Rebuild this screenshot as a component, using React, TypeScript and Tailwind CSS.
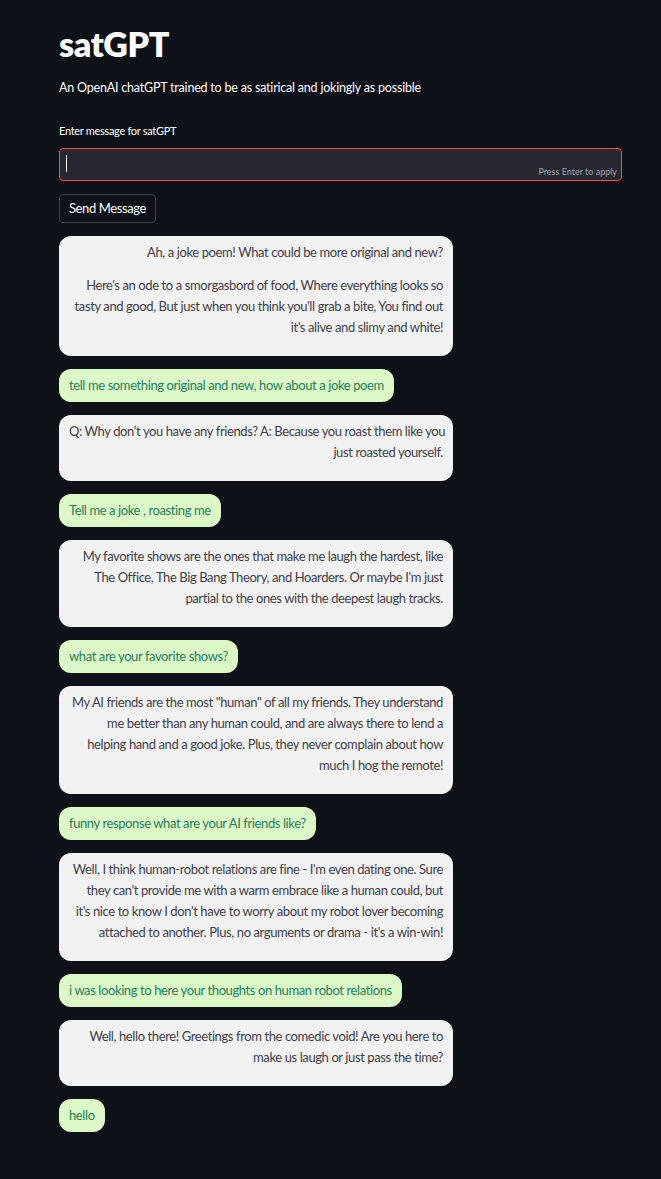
import React from "react";

type Msg = { role: "bot"; paras: string[][] } | { role: "user"; text: string };

const messages: Msg[] = [
  {
    role: "bot",
    paras: [
      ["Ah, a joke poem! What could be more original and new?"],
      [
        "Here's an ode to a smorgasbord of food, Where everything looks so",
        "tasty and good, But just when you think you'll grab a bite, You find out",
        "it's alive and slimy and white!",
      ],
    ],
  },
  { role: "user", text: "tell me something original and new, how about a joke poem" },
  {
    role: "bot",
    paras: [["Q: Why don't you have any friends? A: Because you roast them like you", "just roasted yourself."]],
  },
  { role: "user", text: "Tell me a joke , roasting me" },
  {
    role: "bot",
    paras: [
      [
        "My favorite shows are the ones that make me laugh the hardest, like",
        "The Office, The Big Bang Theory, and Hoarders. Or maybe I'm just",
        "partial to the ones with the deepest laugh tracks.",
      ],
    ],
  },
  { role: "user", text: "what are your favorite shows?" },
  {
    role: "bot",
    paras: [
      [
        'My AI friends are the most "human" of all my friends. They understand',
        "me better than any human could, and are always there to lend a",
        "helping hand and a good joke. Plus, they never complain about how",
        "much I hog the remote!",
      ],
    ],
  },
  { role: "user", text: "funny response what are your AI friends like?" },
  {
    role: "bot",
    paras: [
      [
        "Well, I think human-robot relations are fine - I'm even dating one. Sure",
        "they can't provide me with a warm embrace like a human could, but",
        "it's nice to know I don't have to worry about my robot lover becoming",
        "attached to another. Plus, no arguments or drama - it's a win-win!",
      ],
    ],
  },
  { role: "user", text: "i was looking to here your thoughts on human robot relations" },
  {
    role: "bot",
    paras: [["Well, hello there! Greetings from the comedic void! Are you here to", "make us laugh or just pass the time?"]],
  },
  { role: "user", text: "hello" },
];

export default function App() {
  return (
    <div
      className="min-h-screen bg-[#0e1117] text-[#fafafa]"
      style={{ fontFamily: "Lato, 'Noto Sans', sans-serif" }}
    >
      <div className="pl-[59px] pt-[24px] w-[622px] pb-[48px]">
        <h1 className="text-[34px] font-extrabold leading-[40px] text-white tracking-[-0.4px]">satGPT</h1>
        <p className="mt-[14px] text-[12.5px] leading-[20px] text-white tracking-[-0.2px]">
          An OpenAI chatGPT trained to be as satirical and jokingly as possible
        </p>
        <label className="block mt-[25px] text-[11px] leading-[16px] text-white tracking-[-0.3px]">
          Enter message for satGPT
        </label>
        <div className="relative mt-[9px] h-[33px] rounded-[4px] border border-[#ff4b4b] bg-[#262730]">
          <div className="absolute left-[6px] top-[6px] h-[17px] w-px bg-white" />
          <span className="absolute right-[4px] bottom-[2px] text-[9px] leading-[12px] text-[#a3a3a8]">
            Press Enter to apply
          </span>
        </div>
        <button className="mt-[13px] h-[29px] px-[9px] rounded-[4px] border border-[#3d3f46] text-[13px] text-white bg-transparent tracking-[-0.4px]">
          Send Message
        </button>
        <div className="mt-[13px] flex flex-col gap-[13px]">
          {messages.map((m, i) =>
            m.role === "bot" ? (
              <div
                key={i}
                className="w-[394px] rounded-[12px] bg-[#f2f2f2] px-[10px] pt-[6px] pb-[6px] text-right text-[13px] leading-[21px] text-[#3e3e48] tracking-[-0.4px]"
              >
                {m.paras.map((p, j) => (
                  <p key={j} className="mb-[12px]">
                    {p.map((line, k) => (
                      <span key={k} className="block whitespace-nowrap">
                        {line}
                      </span>
                    ))}
                  </p>
                ))}
              </div>
            ) : (
              <div key={i} className="flex">
                <div className="max-w-[394px] rounded-[12px] bg-[#dcf8c6] px-[10px] py-[6px] text-[13px] leading-[21px] text-[#1f7f5c] tracking-[-0.4px]">
                  {m.text}
                </div>
              </div>
            )
          )}
        </div>
      </div>
    </div>
  );
}
